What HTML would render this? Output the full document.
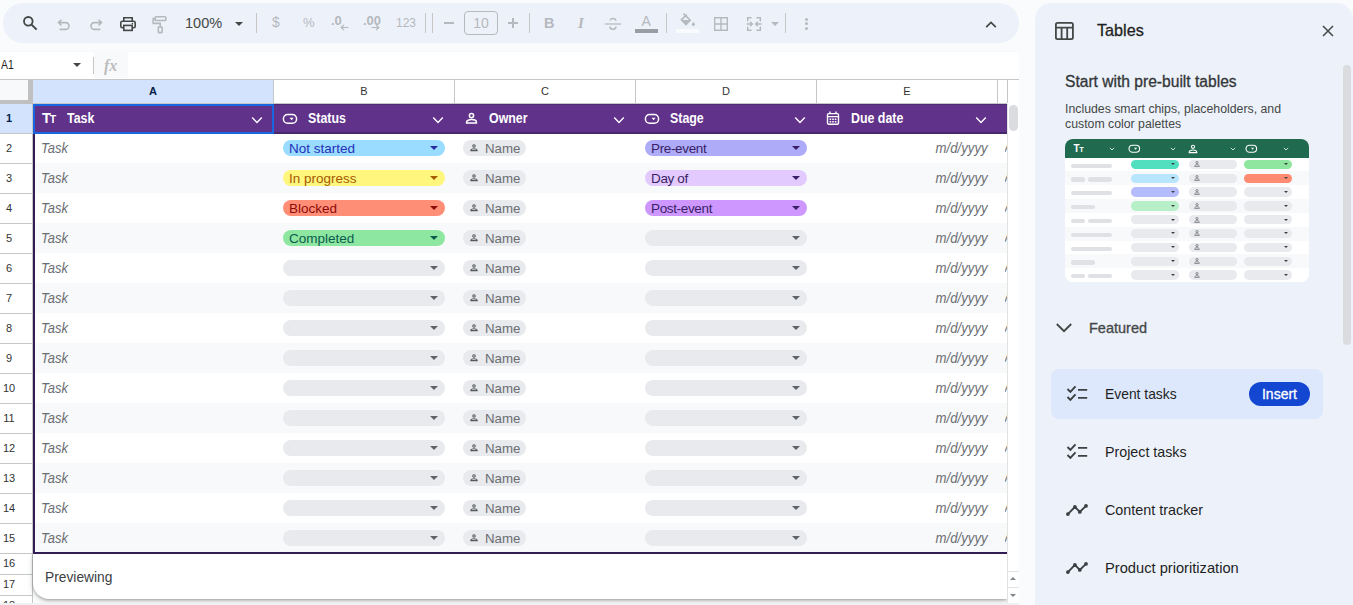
<!DOCTYPE html><html><head><meta charset="utf-8"><title>Tables</title><style>
*{box-sizing:border-box;margin:0;padding:0}
html,body{width:1353px;height:605px;overflow:hidden;background:#f9fbfd;font-family:"Liberation Sans",sans-serif;color:#1f1f1f}
.abs{position:absolute}
#toolbar{position:absolute;left:3px;top:3px;width:1016px;height:40px;border-radius:20px;background:#edf2fa}
#toolbar svg{position:absolute}
.tsep{position:absolute;top:10px;width:1px;height:20px;background:#c7c7c7}
#fbar{position:absolute;left:0;top:51px;width:1019px;height:28px;background:#fff;box-shadow:inset 0 1px 0 #f7f8f9}
#grid{position:absolute;left:0;top:79px;width:1019px;height:526px;background:#fff;overflow:hidden}
.colh{position:absolute;top:1px;height:23px;border-right:1px solid #c4c7c5;background:#fff;font-size:11px;text-align:center;line-height:23px;color:#333}
.rowh{position:absolute;left:0;width:33px;padding-right:14px;border-bottom:1px solid #c4c7c5;border-right:1px solid #c4c7c5;background:#fff;font-size:11px;text-align:center;color:#333}
.r{position:absolute;left:35px;width:972px;height:30px}
.r.alt{background:#f8f9fb}
.task{position:absolute;left:5.5px;top:0;line-height:31px;font-size:14.1px;font-style:italic;color:#6b6e72;transform:scaleX(.92);transform-origin:0 50%}
.chip{position:absolute;height:16px;top:7px;border-radius:8px;font-size:13.5px;line-height:16px;padding-left:6px;background:#e8eaed}
.chip i{position:absolute;right:6.6px;top:5.5px;width:0;height:0;border-left:4.5px solid transparent;border-right:4.5px solid transparent;border-top:4.5px solid #5f6368}
.chip.st,.chip.sg{line-height:17px}
.chip.sg{letter-spacing:-0.35px}
.name{position:absolute;left:428px;top:7px;height:16px;width:63px;border-radius:8px;background:#e8eaed;font-size:13.3px;line-height:17.6px;color:#6b6e72;padding-left:22px}
.date{position:absolute;right:19px;top:0;line-height:31px;font-size:14.1px;font-style:italic;color:#6b6e72;transform:scaleX(.935);transform-origin:100% 50%}
.hd{position:absolute;top:0;height:30px;line-height:28.6px;color:#fff;font-weight:bold;font-size:14px;transform:scaleX(.885);transform-origin:0 50%;white-space:nowrap}
#panel{position:absolute;left:1035px;top:3px;width:318px;height:620px;background:#edf2fa;border-radius:16px 16px 0 0}
.item{position:absolute;left:70px;font-size:15px;color:#1f1f1f}
</style></head><body>
<div id="toolbar"><svg style="left:19px;top:12px" width="16" height="16" viewBox="0 0 16 16"><circle cx="6.3" cy="6.3" r="4.3" fill="none" stroke="#444746" stroke-width="1.8"/><path d="M9.6 9.6 L14.6 14.6" stroke="#444746" stroke-width="2" stroke-linecap="butt"/></svg><svg style="left:54px;top:15px" width="14" height="13" viewBox="0 0 14 13"><path d="M4.4 1.7 L1.5 4.6 L4.4 7.5 M1.8 4.6 H8.6 A3.4 3.4 0 0 1 8.6 11.4 H2.6" fill="none" stroke="#b5b8bd" stroke-width="1.6"/></svg><svg style="left:86px;top:15px" width="14" height="13" viewBox="0 0 14 13"><path d="M9.6 1.7 L12.5 4.6 L9.6 7.5 M12.2 4.6 H5.4 A3.4 3.4 0 0 0 5.4 11.4 H11.4" fill="none" stroke="#b5b8bd" stroke-width="1.6"/></svg><svg style="left:116px;top:13px" width="18" height="16" viewBox="0 0 18 16"><path d="M4.8 5.2 V1.8 H13.2 V5.2" fill="none" stroke="#444746" stroke-width="1.6"/><rect x="1.8" y="5.2" width="14.4" height="6.6" rx="1.6" fill="none" stroke="#444746" stroke-width="1.6"/><rect x="4.8" y="9.4" width="8.4" height="5" fill="#edf2fa" stroke="#444746" stroke-width="1.6"/><circle cx="13.4" cy="7.6" r="0.8" fill="#444746"/></svg><svg style="left:149px;top:12px" width="16" height="19" viewBox="0 0 16 19"><rect x="3.2" y="1.7" width="10.6" height="3.8" rx="0.8" fill="none" stroke="#b5b8bd" stroke-width="1.6"/><path d="M3.2 3.6 H1.2 V8.4 H8.2 V12" fill="none" stroke="#b5b8bd" stroke-width="1.6"/><rect x="6.3" y="12" width="3.8" height="5.6" rx="0.6" fill="none" stroke="#b5b8bd" stroke-width="1.6"/></svg><div class="abs" id="zoomtxt" style="left:182px;top:0;line-height:40px;font-size:14.5px;color:#444746">100%</div><div class="abs" style="left:232px;top:18.5px;border-left:4px solid transparent;border-right:4px solid transparent;border-top:4.5px solid #444746"></div><div class="tsep" style="left:253px"></div><div class="tsep" style="left:422px"></div><div class="tsep" style="left:429px"></div><div class="tsep" style="left:526px"></div><div class="tsep" style="left:663px"></div><div class="tsep" style="left:782px"></div><div class="abs tdis" id="t_dollar" style="left:269px;top:0;line-height:39px;font-size:14px;color:#b5b8bd">$</div><div class="abs tdis" id="t_pct" style="left:300px;top:0;line-height:39px;font-size:13px;color:#b5b8bd">%</div><div class="abs tdis" id="t_d0" style="left:328px;top:0;line-height:36px;font-size:13px;font-weight:bold;color:#b5b8bd">.0</div><svg style="left:337px;top:21px" width="9" height="7" viewBox="0 0 9 7"><path d="M8.5 3.5 H1.5 M4 1 L1.2 3.5 L4 6" fill="none" stroke="#b5b8bd" stroke-width="1.2"/></svg><div class="abs tdis" id="t_d00" style="left:360px;top:0;line-height:36px;font-size:13px;font-weight:bold;color:#b5b8bd">.00</div><svg style="left:368px;top:21px" width="9" height="7" viewBox="0 0 9 7"><path d="M0.5 3.5 H7.5 M5 1 L7.8 3.5 L5 6" fill="none" stroke="#b5b8bd" stroke-width="1.2"/></svg><div class="abs tdis" id="t_123" style="left:393px;top:0;line-height:40px;font-size:12px;color:#b5b8bd">123</div><div class="abs" style="left:441px;top:19.2px;width:10px;height:1.5px;background:#b5b8bd"></div><div class="abs" id="t_fs" style="left:461px;top:8px;width:34px;height:24px;border:1px solid #b5b8bd;border-radius:4px;text-align:center;line-height:22px;font-size:14px;color:#b5b8bd">10</div><div class="abs" style="left:504.5px;top:19.2px;width:10.5px;height:1.5px;background:#b5b8bd"></div><div class="abs" style="left:509px;top:14.7px;width:1.5px;height:10.5px;background:#b5b8bd"></div><div class="abs" id="t_B" style="left:541px;top:0;line-height:40px;font-size:14.5px;font-weight:bold;color:#b5b8bd">B</div><div class="abs" id="t_I" style="left:575px;top:0;line-height:40px;font-size:15px;font-style:italic;font-family:'Liberation Serif',serif;font-weight:bold;color:#b5b8bd">I</div><svg style="left:601px;top:12.8px" width="18" height="16" viewBox="0 0 18 16"><path d="M0.8 8 H17.2" stroke="#b5b8bd" stroke-width="1.2"/><path d="M12 4.6 C11.6 3 10.4 2.4 9 2.4 C7.4 2.4 6.2 3.2 6.2 4.6 M5.8 10.6 C6 12.4 7.4 13.2 9 13.2 C10.8 13.2 12 12.2 12 10.6" fill="none" stroke="#b5b8bd" stroke-width="1.5"/></svg><div class="abs" id="t_A" style="left:638.5px;top:10px;line-height:16px;font-size:14px;color:#b5b8bd">A</div><div class="abs" style="left:632px;top:26px;width:23px;height:4px;background:#9a9da3"></div><svg style="left:675.8px;top:8.8px" width="19" height="17" viewBox="0 0 18 16"><path d="M4.2 1.4 L10.6 7.8 L6.6 11.8 L2.2 7.4 L7.4 2.4" fill="none" stroke="#b5b8bd" stroke-width="1.5"/><path d="M2.6 7.6 H10.4 L6.6 11.4 Z" fill="#b5b8bd"/><path d="M13.6 9.2 C14.6 10.6 15 11.2 15 11.9 A1.4 1.4 0 0 1 12.2 11.9 C12.2 11.2 12.6 10.6 13.6 9.2 Z" fill="#b5b8bd"/></svg><div class="abs" style="left:673px;top:26px;width:23px;height:4px;background:#f8fafd"></div><svg style="left:710px;top:13px" width="16" height="16" viewBox="0 0 16 16"><path d="M1.7 1.7 H14.3 V14.3 H1.7 Z M8 1.7 V14.3 M1.7 8 H14.3" fill="none" stroke="#b5b8bd" stroke-width="1.4"/></svg><svg style="left:742px;top:13px" width="18" height="16" viewBox="0 0 18 16"><path d="M6.6 1.7 H2.7 V5.6 M11.4 1.7 H15.3 V5.6 M6.6 14.3 H2.7 V10.4 M11.4 14.3 H15.3 V10.4 M1.6 8 H7.4 M5.2 5.8 L7.4 8 L5.2 10.2 M16.4 8 H10.6 M12.8 5.8 L10.6 8 L12.8 10.2" fill="none" stroke="#b5b8bd" stroke-width="1.4"/></svg><div class="abs" style="left:768px;top:18.5px;border-left:4px solid transparent;border-right:4px solid transparent;border-top:4.5px solid #b5b8bd"></div><div class="abs" style="left:801.8px;top:14.7px;width:3px;height:3px;border-radius:50%;background:#b5b8bd"></div><div class="abs" style="left:801.8px;top:19.4px;width:3px;height:3px;border-radius:50%;background:#b5b8bd"></div><div class="abs" style="left:801.8px;top:24.1px;width:3px;height:3px;border-radius:50%;background:#b5b8bd"></div><svg style="left:981px;top:16.5px" width="14" height="9" viewBox="0 0 14 9"><path d="M2.2 7.2 L7 2.4 L11.8 7.2" fill="none" stroke="#444746" stroke-width="1.7"/></svg></div>
<div id="fbar"><div class="abs" id="f_a1" style="left:1px;top:0;line-height:28px;font-size:13px;color:#1f1f1f;transform:scaleX(.8);transform-origin:0 50%">A1</div><div class="abs" style="left:73px;top:12px;border-left:4px solid transparent;border-right:4px solid transparent;border-top:4.5px solid #444746"></div><div class="abs" style="left:93px;top:6px;width:1px;height:17px;background:#c7c7c7"></div><div class="abs" style="left:94px;top:0;width:34px;height:27px;background:#f8f9fa"></div><div class="abs" id="f_fx" style="left:104px;top:0;line-height:29px;font-size:16px;font-style:italic;font-weight:bold;font-family:'Liberation Serif',serif;color:#bdbdbd">fx</div></div>
<div id="grid"><div class="abs" style="left:0;top:0;width:1019px;height:1px;background:#c4c7c5"></div><div class="abs" style="left:0;top:24px;width:1007px;height:1px;background:#c4c7c5"></div><div class="abs" style="left:0;top:1px;width:33px;height:27px;background:#f8f9fa"></div><div class="abs" style="left:28px;top:1px;width:5px;height:24px;background:#c0c0c0"></div><div class="abs" style="left:0;top:21px;width:33px;height:4px;background:#c0c0c0"></div><div class="colh" style="left:33px;width:241px;background:#d3e3fd;font-weight:bold;color:#041e49;">A</div><div class="colh" style="left:274px;width:181px;">B</div><div class="colh" style="left:455px;width:181px;">C</div><div class="colh" style="left:636px;width:181px;">D</div><div class="colh" style="left:817px;width:181px;">E</div><div class="colh" style="left:998px;width:10px;"></div><div class="rowh" style="top:25px;height:30px;line-height:29px;background:#d3e3fd;font-weight:bold;color:#041e49;">1</div><div class="rowh" style="top:55px;height:30px;line-height:29px;">2</div><div class="rowh" style="top:85px;height:30px;line-height:29px;">3</div><div class="rowh" style="top:115px;height:30px;line-height:29px;">4</div><div class="rowh" style="top:145px;height:30px;line-height:29px;">5</div><div class="rowh" style="top:175px;height:30px;line-height:29px;">6</div><div class="rowh" style="top:205px;height:30px;line-height:29px;">7</div><div class="rowh" style="top:235px;height:30px;line-height:29px;">8</div><div class="rowh" style="top:265px;height:30px;line-height:29px;">9</div><div class="rowh" style="top:295px;height:30px;line-height:29px;">10</div><div class="rowh" style="top:325px;height:30px;line-height:29px;">11</div><div class="rowh" style="top:355px;height:30px;line-height:29px;">12</div><div class="rowh" style="top:385px;height:30px;line-height:29px;">13</div><div class="rowh" style="top:415px;height:30px;line-height:29px;">14</div><div class="rowh" style="top:445px;height:30px;line-height:29px;">15</div><div class="rowh" style="top:475px;height:21px;line-height:18px;">16</div><div class="rowh" style="top:496px;height:21px;line-height:18px;">17</div><div class="rowh" style="top:517px;height:21px;line-height:18px;">18</div><div class="abs" style="left:33px;top:25px;width:974px;height:30px;background:#61328a;border-top:1px solid #4d2c72;border-bottom:2px solid #47296b"></div><div class="hd" id="h_tt" style="left:42px;top:25px;font-size:14.5px;letter-spacing:-1.2px;transform:none;line-height:29px">T<span style="font-size:10.5px">T</span></div><div class="hd" id="h_task" style="left:67px;top:25px">Task</div><svg class="abs" style="left:251px;top:36.5px" width="12" height="8" viewBox="0 0 12 8"><path d="M1.2 1.6 L6 6.4 L10.8 1.6" fill="none" stroke="#fff" stroke-width="1.4"/></svg><svg class="abs" style="left:282px;top:33.5px" width="16" height="12" viewBox="0 0 16 12"><rect x="1.4" y="1.6" width="13.2" height="8.6" rx="4.3" fill="none" stroke="#fff" stroke-width="1.5"/><path d="M7.6 4.8 H11.6 L9.6 7.2 Z" fill="#fff"/></svg><div class="hd" id="h_status" style="left:308px;top:25px">Status</div><svg class="abs" style="left:432px;top:36.5px" width="12" height="8" viewBox="0 0 12 8"><path d="M1.2 1.6 L6 6.4 L10.8 1.6" fill="none" stroke="#fff" stroke-width="1.4"/></svg><svg class="abs" style="left:465px;top:33px" width="13" height="13" viewBox="0 0 13 13"><circle cx="6.5" cy="3.6" r="2.1" fill="none" stroke="#fff" stroke-width="1.5"/><path d="M1.6 11 V10 C1.6 8.4 4.4 7.6 6.5 7.6 C8.6 7.6 11.4 8.4 11.4 10 V11 Z" fill="none" stroke="#fff" stroke-width="1.5"/></svg><div class="hd" id="h_owner" style="left:489px;top:25px">Owner</div><svg class="abs" style="left:613px;top:36.5px" width="12" height="8" viewBox="0 0 12 8"><path d="M1.2 1.6 L6 6.4 L10.8 1.6" fill="none" stroke="#fff" stroke-width="1.4"/></svg><svg class="abs" style="left:644px;top:33.5px" width="16" height="12" viewBox="0 0 16 12"><rect x="1.4" y="1.6" width="13.2" height="8.6" rx="4.3" fill="none" stroke="#fff" stroke-width="1.5"/><path d="M7.6 4.8 H11.6 L9.6 7.2 Z" fill="#fff"/></svg><div class="hd" id="h_stage" style="left:670px;top:25px">Stage</div><svg class="abs" style="left:794px;top:36.5px" width="12" height="8" viewBox="0 0 12 8"><path d="M1.2 1.6 L6 6.4 L10.8 1.6" fill="none" stroke="#fff" stroke-width="1.4"/></svg><svg class="abs" style="left:826px;top:32px" width="14" height="15" viewBox="0 0 14 15"><rect x="1.5" y="2.6" width="11" height="10.6" rx="1.2" fill="none" stroke="#fff" stroke-width="1.4"/><path d="M4 0.6 V3 M10 0.6 V3 M1.5 5.6 H12.5" stroke="#fff" stroke-width="1.4"/><path d="M3.6 7.6h1.6v1.4h-1.6z M6.2 7.6h1.6v1.4h-1.6z M8.8 7.6h1.6v1.4h-1.6z M3.6 10h1.6v1.4h-1.6z M6.2 10h1.6v1.4h-1.6z M8.8 10h1.6v1.4h-1.6z" fill="#fff"/></svg><div class="hd" id="h_due" style="left:851px;top:25px">Due date</div><svg class="abs" style="left:975px;top:36.5px" width="12" height="8" viewBox="0 0 12 8"><path d="M1.2 1.6 L6 6.4 L10.8 1.6" fill="none" stroke="#fff" stroke-width="1.4"/></svg><div class="abs" style="left:33px;top:25px;width:241px;height:30px;border:2px solid #1967e0"></div><div class="r" style="top:54px"><div class="task">Task</div><div class="chip st" style="left:248px;width:162px;background:#99dcff;color:#2631b8">Not started<i style="border-top-color:#2b2aa6"></i></div><div class="name"><svg class="abs" style="left:6.6px;top:4.4px" width="8" height="8" viewBox="0 0 8 8"><circle cx="4" cy="2" r="1.25" fill="none" stroke="#54575b" stroke-width="1.05"/><path d="M0.8 6.6 C0.8 5.2 2.6 4.7 4 4.7 C5.4 4.7 7.2 5.2 7.2 6.6 Z" fill="none" stroke="#54575b" stroke-width="1.05"/></svg>Name</div><div class="chip sg" style="left:610px;width:162px;background:#aeabf9;color:#3a1f66">Pre-event<i style="border-top-color:#3a1f66"></i></div><div class="date">m/d/yyyy</div><div class="abs" style="left:970px;top:10px;width:2px;height:9px;color:#6b6b6b;font-size:14px;font-style:italic;overflow:hidden;line-height:9px">/</div></div><div class="r alt" style="top:84px"><div class="task">Task</div><div class="chip st" style="left:248px;width:162px;background:#fff67e;color:#a55b00">In progress<i style="border-top-color:#a55b00"></i></div><div class="name"><svg class="abs" style="left:6.6px;top:4.4px" width="8" height="8" viewBox="0 0 8 8"><circle cx="4" cy="2" r="1.25" fill="none" stroke="#54575b" stroke-width="1.05"/><path d="M0.8 6.6 C0.8 5.2 2.6 4.7 4 4.7 C5.4 4.7 7.2 5.2 7.2 6.6 Z" fill="none" stroke="#54575b" stroke-width="1.05"/></svg>Name</div><div class="chip sg" style="left:610px;width:162px;background:#e2caff;color:#3a1f66">Day of<i style="border-top-color:#3a1f66"></i></div><div class="date">m/d/yyyy</div><div class="abs" style="left:970px;top:10px;width:2px;height:9px;color:#6b6b6b;font-size:14px;font-style:italic;overflow:hidden;line-height:9px">/</div></div><div class="r" style="top:114px"><div class="task">Task</div><div class="chip st" style="left:248px;width:162px;background:#ff8e76;color:#8e0b0b">Blocked<i style="border-top-color:#8e0b0b"></i></div><div class="name"><svg class="abs" style="left:6.6px;top:4.4px" width="8" height="8" viewBox="0 0 8 8"><circle cx="4" cy="2" r="1.25" fill="none" stroke="#54575b" stroke-width="1.05"/><path d="M0.8 6.6 C0.8 5.2 2.6 4.7 4 4.7 C5.4 4.7 7.2 5.2 7.2 6.6 Z" fill="none" stroke="#54575b" stroke-width="1.05"/></svg>Name</div><div class="chip sg" style="left:610px;width:162px;background:#cd97ff;color:#3a1f66">Post-event<i style="border-top-color:#3a1f66"></i></div><div class="date">m/d/yyyy</div><div class="abs" style="left:970px;top:10px;width:2px;height:9px;color:#6b6b6b;font-size:14px;font-style:italic;overflow:hidden;line-height:9px">/</div></div><div class="r alt" style="top:144px"><div class="task">Task</div><div class="chip st" style="left:248px;width:162px;background:#8ee7a0;color:#0a5d4e">Completed<i style="border-top-color:#0a5d4e"></i></div><div class="name"><svg class="abs" style="left:6.6px;top:4.4px" width="8" height="8" viewBox="0 0 8 8"><circle cx="4" cy="2" r="1.25" fill="none" stroke="#54575b" stroke-width="1.05"/><path d="M0.8 6.6 C0.8 5.2 2.6 4.7 4 4.7 C5.4 4.7 7.2 5.2 7.2 6.6 Z" fill="none" stroke="#54575b" stroke-width="1.05"/></svg>Name</div><div class="chip" style="left:610px;width:162px"><i></i></div><div class="date">m/d/yyyy</div><div class="abs" style="left:970px;top:10px;width:2px;height:9px;color:#6b6b6b;font-size:14px;font-style:italic;overflow:hidden;line-height:9px">/</div></div><div class="r" style="top:174px"><div class="task">Task</div><div class="chip" style="left:248px;width:162px"><i></i></div><div class="name"><svg class="abs" style="left:6.6px;top:4.4px" width="8" height="8" viewBox="0 0 8 8"><circle cx="4" cy="2" r="1.25" fill="none" stroke="#54575b" stroke-width="1.05"/><path d="M0.8 6.6 C0.8 5.2 2.6 4.7 4 4.7 C5.4 4.7 7.2 5.2 7.2 6.6 Z" fill="none" stroke="#54575b" stroke-width="1.05"/></svg>Name</div><div class="chip" style="left:610px;width:162px"><i></i></div><div class="date">m/d/yyyy</div><div class="abs" style="left:970px;top:10px;width:2px;height:9px;color:#6b6b6b;font-size:14px;font-style:italic;overflow:hidden;line-height:9px">/</div></div><div class="r alt" style="top:204px"><div class="task">Task</div><div class="chip" style="left:248px;width:162px"><i></i></div><div class="name"><svg class="abs" style="left:6.6px;top:4.4px" width="8" height="8" viewBox="0 0 8 8"><circle cx="4" cy="2" r="1.25" fill="none" stroke="#54575b" stroke-width="1.05"/><path d="M0.8 6.6 C0.8 5.2 2.6 4.7 4 4.7 C5.4 4.7 7.2 5.2 7.2 6.6 Z" fill="none" stroke="#54575b" stroke-width="1.05"/></svg>Name</div><div class="chip" style="left:610px;width:162px"><i></i></div><div class="date">m/d/yyyy</div><div class="abs" style="left:970px;top:10px;width:2px;height:9px;color:#6b6b6b;font-size:14px;font-style:italic;overflow:hidden;line-height:9px">/</div></div><div class="r" style="top:234px"><div class="task">Task</div><div class="chip" style="left:248px;width:162px"><i></i></div><div class="name"><svg class="abs" style="left:6.6px;top:4.4px" width="8" height="8" viewBox="0 0 8 8"><circle cx="4" cy="2" r="1.25" fill="none" stroke="#54575b" stroke-width="1.05"/><path d="M0.8 6.6 C0.8 5.2 2.6 4.7 4 4.7 C5.4 4.7 7.2 5.2 7.2 6.6 Z" fill="none" stroke="#54575b" stroke-width="1.05"/></svg>Name</div><div class="chip" style="left:610px;width:162px"><i></i></div><div class="date">m/d/yyyy</div><div class="abs" style="left:970px;top:10px;width:2px;height:9px;color:#6b6b6b;font-size:14px;font-style:italic;overflow:hidden;line-height:9px">/</div></div><div class="r alt" style="top:264px"><div class="task">Task</div><div class="chip" style="left:248px;width:162px"><i></i></div><div class="name"><svg class="abs" style="left:6.6px;top:4.4px" width="8" height="8" viewBox="0 0 8 8"><circle cx="4" cy="2" r="1.25" fill="none" stroke="#54575b" stroke-width="1.05"/><path d="M0.8 6.6 C0.8 5.2 2.6 4.7 4 4.7 C5.4 4.7 7.2 5.2 7.2 6.6 Z" fill="none" stroke="#54575b" stroke-width="1.05"/></svg>Name</div><div class="chip" style="left:610px;width:162px"><i></i></div><div class="date">m/d/yyyy</div><div class="abs" style="left:970px;top:10px;width:2px;height:9px;color:#6b6b6b;font-size:14px;font-style:italic;overflow:hidden;line-height:9px">/</div></div><div class="r" style="top:294px"><div class="task">Task</div><div class="chip" style="left:248px;width:162px"><i></i></div><div class="name"><svg class="abs" style="left:6.6px;top:4.4px" width="8" height="8" viewBox="0 0 8 8"><circle cx="4" cy="2" r="1.25" fill="none" stroke="#54575b" stroke-width="1.05"/><path d="M0.8 6.6 C0.8 5.2 2.6 4.7 4 4.7 C5.4 4.7 7.2 5.2 7.2 6.6 Z" fill="none" stroke="#54575b" stroke-width="1.05"/></svg>Name</div><div class="chip" style="left:610px;width:162px"><i></i></div><div class="date">m/d/yyyy</div><div class="abs" style="left:970px;top:10px;width:2px;height:9px;color:#6b6b6b;font-size:14px;font-style:italic;overflow:hidden;line-height:9px">/</div></div><div class="r alt" style="top:324px"><div class="task">Task</div><div class="chip" style="left:248px;width:162px"><i></i></div><div class="name"><svg class="abs" style="left:6.6px;top:4.4px" width="8" height="8" viewBox="0 0 8 8"><circle cx="4" cy="2" r="1.25" fill="none" stroke="#54575b" stroke-width="1.05"/><path d="M0.8 6.6 C0.8 5.2 2.6 4.7 4 4.7 C5.4 4.7 7.2 5.2 7.2 6.6 Z" fill="none" stroke="#54575b" stroke-width="1.05"/></svg>Name</div><div class="chip" style="left:610px;width:162px"><i></i></div><div class="date">m/d/yyyy</div><div class="abs" style="left:970px;top:10px;width:2px;height:9px;color:#6b6b6b;font-size:14px;font-style:italic;overflow:hidden;line-height:9px">/</div></div><div class="r" style="top:354px"><div class="task">Task</div><div class="chip" style="left:248px;width:162px"><i></i></div><div class="name"><svg class="abs" style="left:6.6px;top:4.4px" width="8" height="8" viewBox="0 0 8 8"><circle cx="4" cy="2" r="1.25" fill="none" stroke="#54575b" stroke-width="1.05"/><path d="M0.8 6.6 C0.8 5.2 2.6 4.7 4 4.7 C5.4 4.7 7.2 5.2 7.2 6.6 Z" fill="none" stroke="#54575b" stroke-width="1.05"/></svg>Name</div><div class="chip" style="left:610px;width:162px"><i></i></div><div class="date">m/d/yyyy</div><div class="abs" style="left:970px;top:10px;width:2px;height:9px;color:#6b6b6b;font-size:14px;font-style:italic;overflow:hidden;line-height:9px">/</div></div><div class="r alt" style="top:384px"><div class="task">Task</div><div class="chip" style="left:248px;width:162px"><i></i></div><div class="name"><svg class="abs" style="left:6.6px;top:4.4px" width="8" height="8" viewBox="0 0 8 8"><circle cx="4" cy="2" r="1.25" fill="none" stroke="#54575b" stroke-width="1.05"/><path d="M0.8 6.6 C0.8 5.2 2.6 4.7 4 4.7 C5.4 4.7 7.2 5.2 7.2 6.6 Z" fill="none" stroke="#54575b" stroke-width="1.05"/></svg>Name</div><div class="chip" style="left:610px;width:162px"><i></i></div><div class="date">m/d/yyyy</div><div class="abs" style="left:970px;top:10px;width:2px;height:9px;color:#6b6b6b;font-size:14px;font-style:italic;overflow:hidden;line-height:9px">/</div></div><div class="r" style="top:414px"><div class="task">Task</div><div class="chip" style="left:248px;width:162px"><i></i></div><div class="name"><svg class="abs" style="left:6.6px;top:4.4px" width="8" height="8" viewBox="0 0 8 8"><circle cx="4" cy="2" r="1.25" fill="none" stroke="#54575b" stroke-width="1.05"/><path d="M0.8 6.6 C0.8 5.2 2.6 4.7 4 4.7 C5.4 4.7 7.2 5.2 7.2 6.6 Z" fill="none" stroke="#54575b" stroke-width="1.05"/></svg>Name</div><div class="chip" style="left:610px;width:162px"><i></i></div><div class="date">m/d/yyyy</div><div class="abs" style="left:970px;top:10px;width:2px;height:9px;color:#6b6b6b;font-size:14px;font-style:italic;overflow:hidden;line-height:9px">/</div></div><div class="r alt" style="top:444px"><div class="task">Task</div><div class="chip" style="left:248px;width:162px"><i></i></div><div class="name"><svg class="abs" style="left:6.6px;top:4.4px" width="8" height="8" viewBox="0 0 8 8"><circle cx="4" cy="2" r="1.25" fill="none" stroke="#54575b" stroke-width="1.05"/><path d="M0.8 6.6 C0.8 5.2 2.6 4.7 4 4.7 C5.4 4.7 7.2 5.2 7.2 6.6 Z" fill="none" stroke="#54575b" stroke-width="1.05"/></svg>Name</div><div class="chip" style="left:610px;width:162px"><i></i></div><div class="date">m/d/yyyy</div><div class="abs" style="left:970px;top:10px;width:2px;height:9px;color:#6b6b6b;font-size:14px;font-style:italic;overflow:hidden;line-height:9px">/</div></div><div class="abs" style="left:33px;top:55px;width:2px;height:420px;background:#351c55"></div><div class="abs" style="left:33px;top:473px;width:974px;height:2px;background:#351c55"></div><div class="abs" style="left:33px;top:475px;width:974px;height:45px;background:#fff;border-radius:0 0 0 16px;box-shadow:0 1px 3px rgba(60,64,67,.4),0 3px 6px rgba(60,64,67,.2)"></div><div class="abs" id="prev" style="left:45px;top:475px;line-height:46px;font-size:14.5px;color:#3c4043;transform:scaleX(.95);transform-origin:0 50%">Previewing</div><div class="abs" style="left:1007px;top:25px;width:12px;height:501px;background:#fff;border-left:1px solid #e1e3e1"></div><div class="abs" style="left:1009px;top:26px;width:9px;height:26px;border-radius:4.5px;background:#dadce0"></div><div class="abs" style="left:1007px;top:492px;width:12px;height:1px;background:#e1e3e1"></div><div class="abs" style="left:1007px;top:508px;width:12px;height:1px;background:#e1e3e1"></div><div class="abs" style="left:1010px;top:498px;border-left:3px solid transparent;border-right:3px solid transparent;border-bottom:3.5px solid #80868b"></div><div class="abs" style="left:1010px;top:515px;border-left:3px solid transparent;border-right:3px solid transparent;border-top:3.5px solid #80868b"></div><div class="abs" style="left:0;top:524px;width:1019px;height:2px;background:#eef0f2"></div><!--GRID--></div>
<div id="panel"><svg class="abs" style="left:18px;top:17px" width="22" height="22" viewBox="0 0 22 22"><rect x="2.9" y="2.9" width="17" height="16.2" rx="1.6" fill="none" stroke="#444746" stroke-width="1.8"/><path d="M2.9 7.6 H19.9 M8.6 7.6 V19.1 M14.2 7.6 V19.1" stroke="#444746" stroke-width="1.8" fill="none"/></svg><div class="abs" id="p_title" style="left:62px;top:15px;line-height:24px;font-size:16.2px;color:#1f1f1f;-webkit-text-stroke:0.3px #1f1f1f">Tables</div><svg class="abs" style="left:286px;top:21px" width="14" height="14" viewBox="0 0 14 14"><path d="M2 2 L12 12 M12 2 L2 12" stroke="#444746" stroke-width="1.5" fill="none"/></svg><div class="abs" id="p_h2" style="left:30px;top:69px;line-height:20px;font-size:15.6px;color:#333638;-webkit-text-stroke:0.3px #333638">Start with pre-built tables</div><div class="abs" id="p_desc" style="left:30px;top:99px;line-height:15px;font-size:12.3px;color:#444746;white-space:nowrap">Includes smart chips, placeholders, and<br>custom color palettes</div><div class="abs" style="left:30px;top:136.0px;width:244px;height:143px;border-radius:8px;overflow:hidden;background:#fff"><div class="abs" style="left:0;top:0;width:244px;height:18.5px;background:#206a4f"></div><div class="abs" style="left:0;top:18.50px;width:244px;height:14.13px;background:#fff"></div><div class="abs" style="left:6.0px;top:24.52px;width:40.5px;height:4.2px;border-radius:2.1px;background:#dfe1e5"></div><div class="abs" style="left:65.5px;top:20.72px;width:48.2px;height:9.4px;border-radius:4.7px;background:#52dfc0"><i class="abs" style="right:4.2px;top:3.6px;border-left:2px solid transparent;border-right:2px solid transparent;border-top:2.5px solid #3c4043"></i></div><div class="abs" style="left:123.8px;top:20.72px;width:48px;height:9.4px;border-radius:4.7px;background:#e8eaed"><svg class="abs" style="left:5.5px;top:1.6px" width="6" height="6" viewBox="0 0 6 6"><circle cx="3" cy="1.6" r="1.1" fill="none" stroke="#5f6368" stroke-width="0.7"/><path d="M0.7 5.4 C0.7 4 2 3.7 3 3.7 C4 3.7 5.3 4 5.3 5.4 Z" fill="none" stroke="#5f6368" stroke-width="0.7"/></svg></div><div class="abs" style="left:178.8px;top:20.72px;width:48.2px;height:9.4px;border-radius:4.7px;background:#8fe79f"><i class="abs" style="right:4.2px;top:3.6px;border-left:2px solid transparent;border-right:2px solid transparent;border-top:2.5px solid #3c4043"></i></div><div class="abs" style="left:0;top:32.33px;width:244px;height:14.13px;background:#f8f9fa"></div><div class="abs" style="left:6.0px;top:38.35px;width:13.5px;height:4.2px;border-radius:2.1px;background:#dfe1e5"></div><div class="abs" style="left:23.0px;top:38.35px;width:23.5px;height:4.2px;border-radius:2.1px;background:#dfe1e5"></div><div class="abs" style="left:65.5px;top:34.55px;width:48.2px;height:9.4px;border-radius:4.7px;background:#b8e6ff"><i class="abs" style="right:4.2px;top:3.6px;border-left:2px solid transparent;border-right:2px solid transparent;border-top:2.5px solid #3c4043"></i></div><div class="abs" style="left:123.8px;top:34.55px;width:48px;height:9.4px;border-radius:4.7px;background:#e8eaed"><svg class="abs" style="left:5.5px;top:1.6px" width="6" height="6" viewBox="0 0 6 6"><circle cx="3" cy="1.6" r="1.1" fill="none" stroke="#5f6368" stroke-width="0.7"/><path d="M0.7 5.4 C0.7 4 2 3.7 3 3.7 C4 3.7 5.3 4 5.3 5.4 Z" fill="none" stroke="#5f6368" stroke-width="0.7"/></svg></div><div class="abs" style="left:178.8px;top:34.55px;width:48.2px;height:9.4px;border-radius:4.7px;background:#ff8b70"><i class="abs" style="right:4.2px;top:3.6px;border-left:2px solid transparent;border-right:2px solid transparent;border-top:2.5px solid #3c4043"></i></div><div class="abs" style="left:0;top:46.17px;width:244px;height:14.13px;background:#fff"></div><div class="abs" style="left:6.0px;top:52.18px;width:40.5px;height:4.2px;border-radius:2.1px;background:#dfe1e5"></div><div class="abs" style="left:65.5px;top:48.38px;width:48.2px;height:9.4px;border-radius:4.7px;background:#b4bcfb"><i class="abs" style="right:4.2px;top:3.6px;border-left:2px solid transparent;border-right:2px solid transparent;border-top:2.5px solid #3c4043"></i></div><div class="abs" style="left:123.8px;top:48.38px;width:48px;height:9.4px;border-radius:4.7px;background:#e8eaed"><svg class="abs" style="left:5.5px;top:1.6px" width="6" height="6" viewBox="0 0 6 6"><circle cx="3" cy="1.6" r="1.1" fill="none" stroke="#5f6368" stroke-width="0.7"/><path d="M0.7 5.4 C0.7 4 2 3.7 3 3.7 C4 3.7 5.3 4 5.3 5.4 Z" fill="none" stroke="#5f6368" stroke-width="0.7"/></svg></div><div class="abs" style="left:178.8px;top:48.38px;width:48.2px;height:9.4px;border-radius:4.7px;background:#e8eaed"><i class="abs" style="right:4.2px;top:3.6px;border-left:2px solid transparent;border-right:2px solid transparent;border-top:2.5px solid #3c4043"></i></div><div class="abs" style="left:0;top:60.00px;width:244px;height:14.13px;background:#f8f9fa"></div><div class="abs" style="left:6.0px;top:66.02px;width:24.0px;height:4.2px;border-radius:2.1px;background:#dfe1e5"></div><div class="abs" style="left:65.5px;top:62.22px;width:48.2px;height:9.4px;border-radius:4.7px;background:#b7f0c8"><i class="abs" style="right:4.2px;top:3.6px;border-left:2px solid transparent;border-right:2px solid transparent;border-top:2.5px solid #3c4043"></i></div><div class="abs" style="left:123.8px;top:62.22px;width:48px;height:9.4px;border-radius:4.7px;background:#e8eaed"><svg class="abs" style="left:5.5px;top:1.6px" width="6" height="6" viewBox="0 0 6 6"><circle cx="3" cy="1.6" r="1.1" fill="none" stroke="#5f6368" stroke-width="0.7"/><path d="M0.7 5.4 C0.7 4 2 3.7 3 3.7 C4 3.7 5.3 4 5.3 5.4 Z" fill="none" stroke="#5f6368" stroke-width="0.7"/></svg></div><div class="abs" style="left:178.8px;top:62.22px;width:48.2px;height:9.4px;border-radius:4.7px;background:#e8eaed"><i class="abs" style="right:4.2px;top:3.6px;border-left:2px solid transparent;border-right:2px solid transparent;border-top:2.5px solid #3c4043"></i></div><div class="abs" style="left:0;top:73.83px;width:244px;height:14.13px;background:#fff"></div><div class="abs" style="left:6.0px;top:79.85px;width:13.5px;height:4.2px;border-radius:2.1px;background:#dfe1e5"></div><div class="abs" style="left:23.0px;top:79.85px;width:23.5px;height:4.2px;border-radius:2.1px;background:#dfe1e5"></div><div class="abs" style="left:65.5px;top:76.05px;width:48.2px;height:9.4px;border-radius:4.7px;background:#e8eaed"><i class="abs" style="right:4.2px;top:3.6px;border-left:2px solid transparent;border-right:2px solid transparent;border-top:2.5px solid #3c4043"></i></div><div class="abs" style="left:123.8px;top:76.05px;width:48px;height:9.4px;border-radius:4.7px;background:#e8eaed"><svg class="abs" style="left:5.5px;top:1.6px" width="6" height="6" viewBox="0 0 6 6"><circle cx="3" cy="1.6" r="1.1" fill="none" stroke="#5f6368" stroke-width="0.7"/><path d="M0.7 5.4 C0.7 4 2 3.7 3 3.7 C4 3.7 5.3 4 5.3 5.4 Z" fill="none" stroke="#5f6368" stroke-width="0.7"/></svg></div><div class="abs" style="left:178.8px;top:76.05px;width:48.2px;height:9.4px;border-radius:4.7px;background:#e8eaed"><i class="abs" style="right:4.2px;top:3.6px;border-left:2px solid transparent;border-right:2px solid transparent;border-top:2.5px solid #3c4043"></i></div><div class="abs" style="left:0;top:87.67px;width:244px;height:14.13px;background:#f8f9fa"></div><div class="abs" style="left:6.0px;top:93.68px;width:40.5px;height:4.2px;border-radius:2.1px;background:#dfe1e5"></div><div class="abs" style="left:65.5px;top:89.88px;width:48.2px;height:9.4px;border-radius:4.7px;background:#e8eaed"><i class="abs" style="right:4.2px;top:3.6px;border-left:2px solid transparent;border-right:2px solid transparent;border-top:2.5px solid #3c4043"></i></div><div class="abs" style="left:123.8px;top:89.88px;width:48px;height:9.4px;border-radius:4.7px;background:#e8eaed"><svg class="abs" style="left:5.5px;top:1.6px" width="6" height="6" viewBox="0 0 6 6"><circle cx="3" cy="1.6" r="1.1" fill="none" stroke="#5f6368" stroke-width="0.7"/><path d="M0.7 5.4 C0.7 4 2 3.7 3 3.7 C4 3.7 5.3 4 5.3 5.4 Z" fill="none" stroke="#5f6368" stroke-width="0.7"/></svg></div><div class="abs" style="left:178.8px;top:89.88px;width:48.2px;height:9.4px;border-radius:4.7px;background:#e8eaed"><i class="abs" style="right:4.2px;top:3.6px;border-left:2px solid transparent;border-right:2px solid transparent;border-top:2.5px solid #3c4043"></i></div><div class="abs" style="left:0;top:101.50px;width:244px;height:14.13px;background:#fff"></div><div class="abs" style="left:6.0px;top:107.52px;width:40.5px;height:4.2px;border-radius:2.1px;background:#dfe1e5"></div><div class="abs" style="left:65.5px;top:103.72px;width:48.2px;height:9.4px;border-radius:4.7px;background:#e8eaed"><i class="abs" style="right:4.2px;top:3.6px;border-left:2px solid transparent;border-right:2px solid transparent;border-top:2.5px solid #3c4043"></i></div><div class="abs" style="left:123.8px;top:103.72px;width:48px;height:9.4px;border-radius:4.7px;background:#e8eaed"><svg class="abs" style="left:5.5px;top:1.6px" width="6" height="6" viewBox="0 0 6 6"><circle cx="3" cy="1.6" r="1.1" fill="none" stroke="#5f6368" stroke-width="0.7"/><path d="M0.7 5.4 C0.7 4 2 3.7 3 3.7 C4 3.7 5.3 4 5.3 5.4 Z" fill="none" stroke="#5f6368" stroke-width="0.7"/></svg></div><div class="abs" style="left:178.8px;top:103.72px;width:48.2px;height:9.4px;border-radius:4.7px;background:#e8eaed"><i class="abs" style="right:4.2px;top:3.6px;border-left:2px solid transparent;border-right:2px solid transparent;border-top:2.5px solid #3c4043"></i></div><div class="abs" style="left:0;top:115.33px;width:244px;height:14.13px;background:#f8f9fa"></div><div class="abs" style="left:6.0px;top:121.35px;width:24.0px;height:4.2px;border-radius:2.1px;background:#dfe1e5"></div><div class="abs" style="left:65.5px;top:117.55px;width:48.2px;height:9.4px;border-radius:4.7px;background:#e8eaed"><i class="abs" style="right:4.2px;top:3.6px;border-left:2px solid transparent;border-right:2px solid transparent;border-top:2.5px solid #3c4043"></i></div><div class="abs" style="left:123.8px;top:117.55px;width:48px;height:9.4px;border-radius:4.7px;background:#e8eaed"><svg class="abs" style="left:5.5px;top:1.6px" width="6" height="6" viewBox="0 0 6 6"><circle cx="3" cy="1.6" r="1.1" fill="none" stroke="#5f6368" stroke-width="0.7"/><path d="M0.7 5.4 C0.7 4 2 3.7 3 3.7 C4 3.7 5.3 4 5.3 5.4 Z" fill="none" stroke="#5f6368" stroke-width="0.7"/></svg></div><div class="abs" style="left:178.8px;top:117.55px;width:48.2px;height:9.4px;border-radius:4.7px;background:#e8eaed"><i class="abs" style="right:4.2px;top:3.6px;border-left:2px solid transparent;border-right:2px solid transparent;border-top:2.5px solid #3c4043"></i></div><div class="abs" style="left:0;top:129.17px;width:244px;height:14.13px;background:#fff"></div><div class="abs" style="left:6.0px;top:135.18px;width:13.5px;height:4.2px;border-radius:2.1px;background:#dfe1e5"></div><div class="abs" style="left:23.0px;top:135.18px;width:23.5px;height:4.2px;border-radius:2.1px;background:#dfe1e5"></div><div class="abs" style="left:65.5px;top:131.38px;width:48.2px;height:9.4px;border-radius:4.7px;background:#e8eaed"><i class="abs" style="right:4.2px;top:3.6px;border-left:2px solid transparent;border-right:2px solid transparent;border-top:2.5px solid #3c4043"></i></div><div class="abs" style="left:123.8px;top:131.38px;width:48px;height:9.4px;border-radius:4.7px;background:#e8eaed"><svg class="abs" style="left:5.5px;top:1.6px" width="6" height="6" viewBox="0 0 6 6"><circle cx="3" cy="1.6" r="1.1" fill="none" stroke="#5f6368" stroke-width="0.7"/><path d="M0.7 5.4 C0.7 4 2 3.7 3 3.7 C4 3.7 5.3 4 5.3 5.4 Z" fill="none" stroke="#5f6368" stroke-width="0.7"/></svg></div><div class="abs" style="left:178.8px;top:131.38px;width:48.2px;height:9.4px;border-radius:4.7px;background:#e8eaed"><i class="abs" style="right:4.2px;top:3.6px;border-left:2px solid transparent;border-right:2px solid transparent;border-top:2.5px solid #3c4043"></i></div><div class="abs" style="left:8.5px;top:3px;line-height:13px;font-size:10px;font-weight:bold;color:#fff;letter-spacing:-0.4px">T<span style="font-size:7.5px">T</span></div><svg class="abs" style="left:43.5px;top:8px" width="6" height="4" viewBox="0 0 6 4"><path d="M0.8 0.8 L3 3 L5.2 0.8" fill="none" stroke="#d7efe4" stroke-width="0.9"/></svg><svg class="abs" style="left:104.5px;top:8px" width="6" height="4" viewBox="0 0 6 4"><path d="M0.8 0.8 L3 3 L5.2 0.8" fill="none" stroke="#d7efe4" stroke-width="0.9"/></svg><svg class="abs" style="left:164.5px;top:8px" width="6" height="4" viewBox="0 0 6 4"><path d="M0.8 0.8 L3 3 L5.2 0.8" fill="none" stroke="#d7efe4" stroke-width="0.9"/></svg><svg class="abs" style="left:218.0px;top:8px" width="6" height="4" viewBox="0 0 6 4"><path d="M0.8 0.8 L3 3 L5.2 0.8" fill="none" stroke="#d7efe4" stroke-width="0.9"/></svg><svg class="abs" style="left:63.0px;top:5px" width="13" height="10" viewBox="0 0 13 10"><rect x="1" y="1.2" width="10.6" height="7" rx="3.5" fill="none" stroke="#fff" stroke-width="1.1"/><path d="M6 3.8 H9.2 L7.6 5.8 Z" fill="#fff"/></svg><svg class="abs" style="left:180.0px;top:5px" width="13" height="10" viewBox="0 0 13 10"><rect x="1" y="1.2" width="10.6" height="7" rx="3.5" fill="none" stroke="#fff" stroke-width="1.1"/><path d="M6 3.8 H9.2 L7.6 5.8 Z" fill="#fff"/></svg><svg class="abs" style="left:123px;top:4.5px" width="10" height="10" viewBox="0 0 10 10"><circle cx="5" cy="2.8" r="1.6" fill="none" stroke="#fff" stroke-width="1.1"/><path d="M1.2 8.6 C1.2 6.6 3.4 6 5 6 C6.6 6 8.8 6.6 8.8 8.6 Z" fill="none" stroke="#fff" stroke-width="1.1"/></svg></div><svg class="abs" style="left:20px;top:319px" width="18" height="12" viewBox="0 0 18 12"><path d="M1.8 2 L9 9.2 L16.2 2" fill="none" stroke="#444746" stroke-width="1.9"/></svg><div class="abs" id="p_feat" style="left:54px;top:315px;line-height:20px;font-size:14.5px;color:#444746;-webkit-text-stroke:0.3px #444746">Featured</div><div class="abs" style="left:16px;top:366px;width:272px;height:50px;border-radius:8px;background:#dde8fc"></div><svg class="abs" style="left:31px;top:382px" width="23" height="18" viewBox="0 0 23 18"><path d="M1.5 4.0 L4.4 6.9 L9.5 1.3 M1.5 12.0 L4.4 14.9 L9.5 9.3 M12 4.9 H21.2 M12 12.9 H21.2" fill="none" stroke="#3c4043" stroke-width="1.9"/></svg><div class="abs it" id="p_it0" style="left:70px;top:381px;line-height:20px;font-size:14.5px;color:#1f1f1f;white-space:nowrap;transform:scaleX(0.956);transform-origin:0 50%">Event tasks</div><svg class="abs" style="left:31px;top:440px" width="23" height="18" viewBox="0 0 23 18"><path d="M1.5 4.0 L4.4 6.9 L9.5 1.3 M1.5 12.0 L4.4 14.9 L9.5 9.3 M12 4.9 H21.2 M12 12.9 H21.2" fill="none" stroke="#3c4043" stroke-width="1.9"/></svg><div class="abs it" id="p_it1" style="left:70px;top:439px;line-height:20px;font-size:14.5px;color:#1f1f1f;white-space:nowrap;transform:scaleX(0.983);transform-origin:0 50%">Project tasks</div><svg class="abs" style="left:31px;top:500px" width="24" height="14" viewBox="0 0 24 14"><path d="M1.9 11.1 L8.9 3.9 L13.8 8.9 L20 2.9" fill="none" stroke="#3c4043" stroke-width="1.9" stroke-linejoin="round" stroke-linecap="round"/><circle cx="1.9" cy="11.1" r="1.9" fill="#3c4043"/><circle cx="8.9" cy="3.9" r="1.9" fill="#3c4043"/><circle cx="13.8" cy="8.9" r="1.9" fill="#3c4043"/><circle cx="20" cy="2.9" r="1.9" fill="#3c4043"/></svg><div class="abs it" id="p_it2" style="left:70px;top:497px;line-height:20px;font-size:14.5px;color:#1f1f1f;white-space:nowrap;transform:scaleX(0.990);transform-origin:0 50%">Content tracker</div><svg class="abs" style="left:31px;top:558px" width="24" height="14" viewBox="0 0 24 14"><path d="M1.9 11.1 L8.9 3.9 L13.8 8.9 L20 2.9" fill="none" stroke="#3c4043" stroke-width="1.9" stroke-linejoin="round" stroke-linecap="round"/><circle cx="1.9" cy="11.1" r="1.9" fill="#3c4043"/><circle cx="8.9" cy="3.9" r="1.9" fill="#3c4043"/><circle cx="13.8" cy="8.9" r="1.9" fill="#3c4043"/><circle cx="20" cy="2.9" r="1.9" fill="#3c4043"/></svg><div class="abs it" id="p_it3" style="left:70px;top:555px;line-height:20px;font-size:14.5px;color:#1f1f1f;white-space:nowrap;transform:scaleX(1.012);transform-origin:0 50%">Product prioritization</div><div class="abs" id="p_ins" style="left:214px;top:379px;width:61px;height:24px;border-radius:12px;background:#1346d1;color:#fff;font-size:14px;line-height:24px;text-align:center;-webkit-text-stroke:0.3px #fff">Insert</div><div class="abs" style="left:308px;top:62px;width:8px;height:280px;border-radius:4px;background:#dadce0"></div></div>
</body></html>
